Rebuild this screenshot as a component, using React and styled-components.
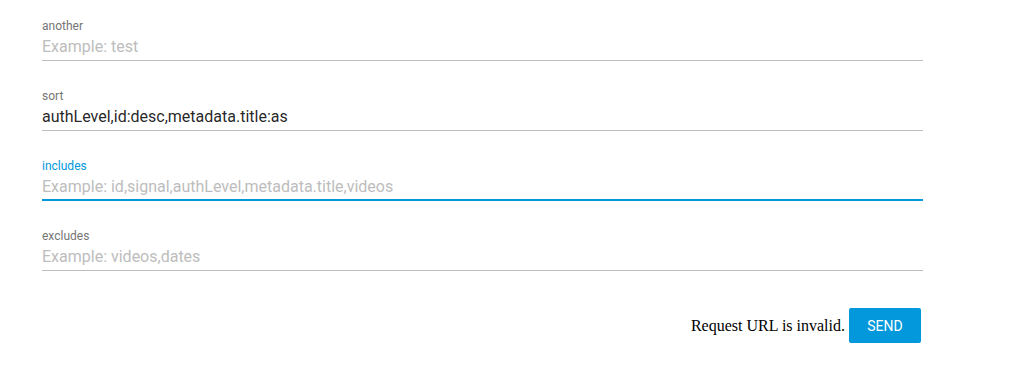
import React from "react";
import styled, { createGlobalStyle } from "styled-components";

const GlobalStyle = createGlobalStyle`
  body {
    margin: 0;
    background: #fff;
  }
`;

const fields = [
  { label: "another", placeholder: "Example: test" },
  { label: "sort", value: "authLevel,id:desc,metadata.title:as" },
  {
    label: "includes",
    placeholder: "Example: id,signal,authLevel,metadata.title,videos",
    focused: true,
  },
  { label: "excludes", placeholder: "Example: videos,dates" },
];

function App() {
  return (
    <Page>
      <GlobalStyle />
      <Form>
        {fields.map((f) => (
          <Field key={f.label} focused={f.focused}>
            <Label focused={f.focused}>{f.label}</Label>
            <Input
              placeholder={f.placeholder}
              value={f.value || ""}
              readOnly
            />
          </Field>
        ))}
      </Form>
      <Footer>
        <Message>Request URL is invalid.</Message>
        <SendButton>Send</SendButton>
      </Footer>
    </Page>
  );
}

export default App;

const Page = styled.div`
  width: 881px;
  margin: 0 42px;
  padding-top: 19px;
`;

const Form = styled.div`
  display: flex;
  flex-direction: column;
  gap: 28px;
`;

// focused field gets a thicker blue line, growing upward by a pixel
const Field = styled.div`
  display: flex;
  flex-direction: column;
  padding-bottom: ${(props) => (props.focused ? "2px" : "3px")};
  border-bottom: ${(props) =>
    props.focused ? "2px solid #0398db" : "1px solid #bdbdbd"};
`;

const Label = styled.label`
  font-family: Roboto, "Liberation Sans", sans-serif;
  font-size: 12px;
  line-height: 14px;
  color: ${(props) => (props.focused ? "#0398db" : "#757575")};
  margin-bottom: 4px;
`;

const Input = styled.input`
  border: none;
  outline: none;
  padding: 0;
  margin: 0;
  height: 20px;
  font-family: Roboto, "Liberation Sans", sans-serif;
  font-size: 16px;
  line-height: 20px;
  color: rgba(0, 0, 0, 0.87);
  background: transparent;

  &::placeholder {
    color: #bdbdbd;
  }
`;

const Footer = styled.div`
  display: flex;
  justify-content: flex-end;
  align-items: baseline;
  gap: 4px;
  margin-top: 37px;
  padding-right: 2px;
`;

const Message = styled.span`
  font-family: "Liberation Serif", "Times New Roman", serif;
  font-size: 16px;
  color: #000;
`;

const SendButton = styled.button`
  width: 72px;
  height: 35px;
  border: none;
  border-radius: 2px;
  background: #0398db;
  color: #fff;
  font-family: Roboto, "Liberation Sans", sans-serif;
  font-size: 14px;
  text-transform: uppercase;
  cursor: pointer;
`;
